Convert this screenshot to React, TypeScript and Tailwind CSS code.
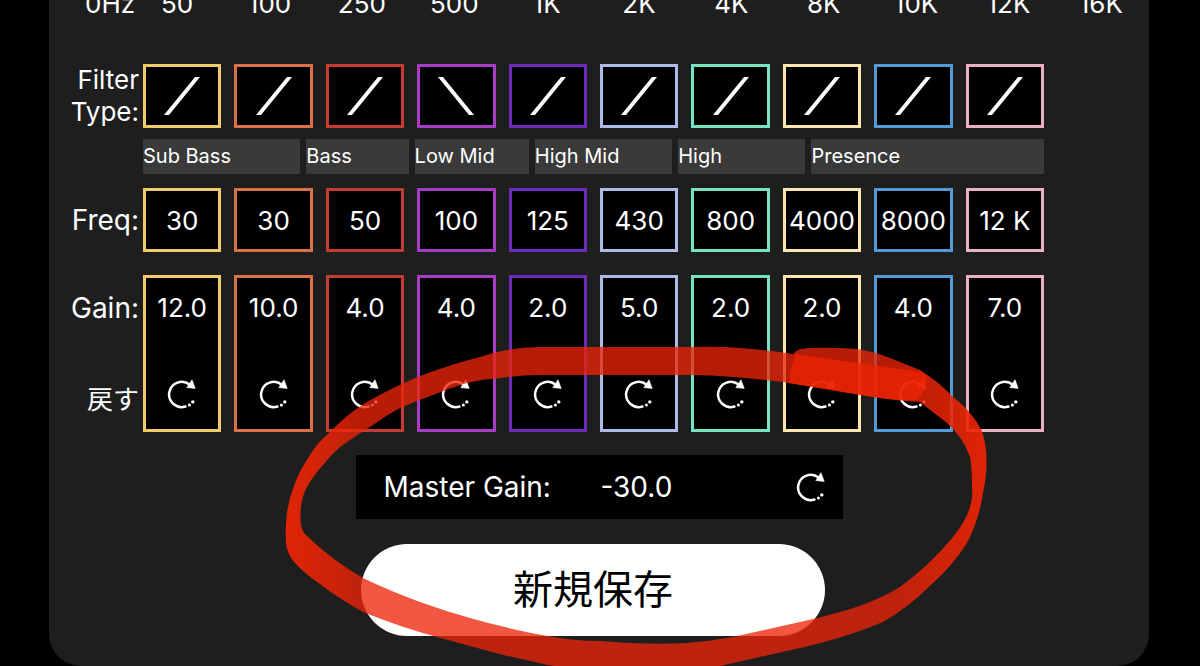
import React, { useState } from 'react';
import { clsx } from 'clsx';

interface Band {
    freq: string;
    gain: string;
    falling?: boolean;
    border: string;
}

const AXIS = ['50', '100', '250', '500', '1K', '2K', '4K', '8K', '10K', '12K', '16K'];

const RANGES = ['Sub Bass', 'Bass', 'Low Mid', 'High Mid', 'High', 'Presence'];

const DEFAULT_BANDS: Band[] = [
    { freq: '30', gain: '12.0', border: 'border-[#efcb6a]' },
    { freq: '30', gain: '10.0', border: 'border-[#db7148]' },
    { freq: '50', gain: '4.0', border: 'border-[#c43c30]' },
    { freq: '100', gain: '4.0', falling: true, border: 'border-[#a83bc4]' },
    { freq: '125', gain: '2.0', border: 'border-[#6e2bb8]' },
    { freq: '430', gain: '5.0', border: 'border-[#adb9e6]' },
    { freq: '800', gain: '2.0', border: 'border-[#74e3c4]' },
    { freq: '4000', gain: '2.0', border: 'border-[#fbe6b0]' },
    { freq: '8000', gain: '4.0', border: 'border-[#529bd8]' },
    { freq: '12 K', gain: '7.0', border: 'border-[#eab0c8]' },
];

const SlopeIcon = ({ falling }: { falling?: boolean }) => (
    <svg width="36" height="38" viewBox="0 0 36 38" fill="white" aria-hidden="true">
        {falling ? <path d="M0 0h5l31 38h-5z" /> : <path d="M31 0h5L5 38H0z" />}
    </svg>
);

const ResetIcon = () => (
    <svg width="32" height="32" viewBox="0 0 32 32" fill="none" aria-hidden="true">
        <path
            d="M23.8 6.8A12.6 12.6 0 1 0 19.4 28.5"
            stroke="white"
            strokeWidth="2.5"
            strokeLinecap="round"
        />
        <path d="M26 1.8L29.2 10.4L20.8 9.6z" fill="white" stroke="white" strokeWidth="0.6" strokeLinejoin="round" />
        <circle cx="23.4" cy="26.9" r="1.5" fill="white" />
        <circle cx="26.8" cy="23.9" r="1.7" fill="white" />
    </svg>
);

// Freehand marker ring around the master gain and save controls
const MarkerRing = () => (
    <svg
        className="pointer-events-none absolute left-0 top-0"
        width="1200"
        height="666"
        viewBox="0 0 1200 666"
        aria-hidden="true"
    >
        <defs>
            <linearGradient id="ink" gradientUnits="userSpaceOnUse" x1="287" y1="0" x2="987" y2="0">
                <stop offset="0" stopColor="#ec2404" stopOpacity="0.94" />
                <stop offset="0.04" stopColor="#ec2404" stopOpacity="0.88" />
                <stop offset="0.11" stopColor="#ec2408" stopOpacity="0.77" />
                <stop offset="0.86" stopColor="#ec2408" stopOpacity="0.77" />
                <stop offset="0.96" stopColor="#ec2404" stopOpacity="0.88" />
                <stop offset="1" stopColor="#ec2404" stopOpacity="0.94" />
            </linearGradient>
        </defs>
        <path
            fill="url(#ink)"
            fillRule="evenodd"
            d="M793 354Q797 348 810 348Q834 347 857 349Q876 352 890 358L920 370Q939 382 953 397Q966 407 973 417Q983 429 985 443Q989 465 983 493Q979 520 967 543Q953 565 933 583Q908 608 883 622Q845 638 800 648L720 666Q690 672 637 672Q590 672 553 666L503 655L437 637Q400 627 363 612Q338 598 320 584Q304 573 295 563Q287 554 286 543Q285 528 287 513Q289 498 295 483Q300 470 310 455Q318 442 330 432Q345 416 365 403Q395 386 420 376Q455 363 480 357Q510 347 540 347H690Q718 346 740 348Q768 350 793 354Z
               M783 382Q757 379 733 377Q712 375 690 375H540Q520 375 500 378Q483 379 467 383Q450 388 433 395Q416 401 400 408Q385 416 373 425Q355 436 340 447Q331 455 323 465Q313 476 307 487Q302 496 301 507Q300 517 301 525Q302 532 308 537Q332 560 363 578Q390 591 420 602Q445 611 470 618Q512 630 553 637Q576 641 600 641Q645 645 687 643Q710 641 733 637L800 622Q824 617 847 610Q875 602 900 587Q930 565 953 537Q966 521 970 507Q973 497 972 487Q972 468 970 457Q963 437 947 423L920 402Q900 401 873 397Z"
        />
        <path
            fill="#ec2402"
            fillOpacity="0.78"
            d="M796 354L857 363L922 372Q929 376 926 386Q922 396 917 400Q900 401 873 397L789 383Q790 366 796 354Z"
        />
    </svg>
);

const boxClass = 'border-[3px] bg-black';

export default function App() {
    const [bands, setBands] = useState<Band[]>(DEFAULT_BANDS);
    const [master, setMaster] = useState('-30.0');

    const update = (index: number, patch: Partial<Band>) => {
        setBands(bands.map((band, i) => (i === index ? { ...band, ...patch } : band)));
    };

    return (
        <div className="relative min-h-screen overflow-hidden bg-black font-['Inter','Noto_Sans_CJK_JP',sans-serif] text-white">
            <main className="-mt-3 ml-[49px] mr-[51px] rounded-b-[32px] bg-[#1e1e1e] pb-[30px]">
                <div className="flex pr-[2px] text-[26px] leading-8">
                    <span className="w-[82px] shrink-0 whitespace-nowrap pl-9">0Hz</span>
                    <div className="grid flex-1 grid-cols-11 text-center">
                        {AXIS.map(tick => (
                            <span key={tick}>{tick}</span>
                        ))}
                    </div>
                </div>

                <div className="mt-11 grid grid-cols-[94px_1fr] pr-[105px]">
                    <span className="self-center pr-1 text-right text-[26px] leading-8">Filter Type:</span>
                    <div className="grid grid-cols-10 gap-x-[13px]">
                        {bands.map((band, i) => (
                            <button
                                key={i}
                                aria-label={`Filter type ${i + 1}`}
                                onClick={() => update(i, { falling: !band.falling })}
                                className={clsx('flex h-16 items-center justify-center', boxClass, band.border)}
                            >
                                <SlopeIcon falling={band.falling} />
                            </button>
                        ))}
                    </div>

                    <div className="col-start-2 mt-[11px] grid grid-cols-[157fr_102fr_114fr_137fr_127fr_232fr] gap-x-[6px]">
                        {RANGES.map(range => (
                            <span key={range} className="h-[35px] whitespace-nowrap bg-[#3a3a3a] text-[20px] leading-[35px]">
                                {range}
                            </span>
                        ))}
                    </div>

                    <span className="mt-[14px] self-center pr-1 text-right text-[28px]">Freq:</span>
                    <div className="mt-[14px] grid grid-cols-10 gap-x-[13px]">
                        {bands.map((band, i) => (
                            <input
                                key={i}
                                aria-label={`Frequency ${i + 1}`}
                                value={band.freq}
                                onChange={e => update(i, { freq: e.target.value })}
                                className={clsx('h-16 w-full min-w-0 text-center text-[26px] outline-none', boxClass, band.border)}
                            />
                        ))}
                    </div>

                    <div className="mt-[23px] flex flex-col pr-1 pt-3 text-right">
                        <span className="text-[28px] leading-[42px]">Gain:</span>
                        <span className="mt-[50px] text-[26px] leading-[42px]">戻す</span>
                    </div>
                    <div className="mt-[23px] grid grid-cols-10 gap-x-[13px]">
                        {bands.map((band, i) => (
                            <div key={i} className={clsx('flex h-[157px] flex-col items-center justify-between pb-[19px] pt-2', boxClass, band.border)}>
                                <input
                                    aria-label={`Gain ${i + 1}`}
                                    value={band.gain}
                                    onChange={e => update(i, { gain: e.target.value })}
                                    className="h-[42px] w-full min-w-0 bg-transparent text-center text-[26px] outline-none"
                                />
                                <button aria-label={`Reset gain ${i + 1}`} onClick={() => update(i, { gain: DEFAULT_BANDS[i].gain })}>
                                    <ResetIcon />
                                </button>
                            </div>
                        ))}
                    </div>
                </div>

                <div className="mx-auto mt-[23px] flex h-16 w-[487px] items-center bg-black pl-7 pr-4 text-[28px]">
                    <label htmlFor="master" className="w-[217px] whitespace-nowrap">Master Gain:</label>
                    <input
                        id="master"
                        value={master}
                        onChange={e => setMaster(e.target.value)}
                        className="min-w-0 flex-1 bg-transparent outline-none"
                    />
                    <button aria-label="Reset master gain" onClick={() => setMaster('-30.0')}>
                        <ResetIcon />
                    </button>
                </div>

                <div className="mt-[25px] flex justify-center pr-3">
                    <button className="h-[92px] w-[464px] rounded-full bg-white text-[40px] text-black">
                        新規保存
                    </button>
                </div>
            </main>

            <MarkerRing />
        </div>
    );
}
